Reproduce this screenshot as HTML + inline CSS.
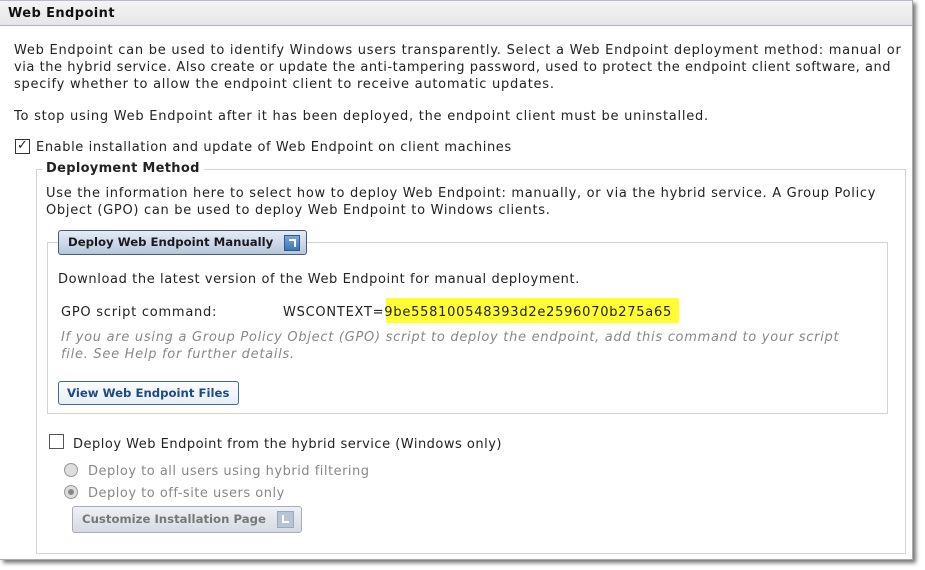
<!DOCTYPE html>
<html><head><style>
*{margin:0;padding:0;box-sizing:border-box}
body{width:925px;height:570px;background:#fff;position:relative;overflow:hidden;font-family:"DejaVu Sans","Liberation Sans",sans-serif;font-size:13px;color:#222;letter-spacing:0.75px}
.a{position:absolute;white-space:nowrap;line-height:17px;margin-top:1px}
#panel{position:absolute;left:0;top:0;width:913px;height:560px;background:#fff;border-right:1px solid #aaa;border-bottom:1px solid #aaa;box-shadow:3px 3px 4px #777}
#hdr{position:absolute;left:0;top:0;width:912px;height:26px;background:linear-gradient(#f4f4f4,#e6e6e6);border-top:1px solid #b8bcc8;border-bottom:1px solid #b0b4c0}
.box{position:absolute;border:1px solid #d4d4d4}
.btn{position:absolute;font-weight:bold;font-size:11.7px;letter-spacing:0;text-align:left;padding-left:9px;line-height:22px;border-radius:3px;white-space:nowrap}
.g{color:#888}
.cb{position:absolute;width:15px;height:15px;border:1px solid #333;background:#fff;letter-spacing:0}
.rd{position:absolute;width:14px;height:14px;border-radius:50%;border:1px solid #999;background:#ddd}
</style></head><body>
<div id="panel"></div>
<div id="hdr"></div>
<div class="a" style="left:8px;top:4px;font-weight:bold;color:#111;letter-spacing:0.4px">Web Endpoint</div>
<div class="a" style="left:14px;top:41px">Web Endpoint can be used to identify Windows users transparently. Select a Web Endpoint deployment method: manual or<br><span style="letter-spacing:0.55px">via the hybrid service. Also create or update the anti-tampering password, used to protect the endpoint client software, and</span><br>specify whether to allow the endpoint client to receive automatic updates.</div>
<div class="a" style="left:14px;top:107px">To stop using Web Endpoint after it has been deployed, the endpoint client must be uninstalled.</div>
<div class="cb" style="left:15px;top:139px;font-size:13px;line-height:12px;text-align:center">✓</div>
<div class="a" style="left:36px;top:138px;letter-spacing:0.6px">Enable installation and update of Web Endpoint on client machines</div>
<div class="box" style="left:36px;top:169px;width:870px;height:385px"></div>
<div class="a" style="left:42px;top:159px;background:#fff;padding:0 4px;font-weight:bold;letter-spacing:0.3px">Deployment Method</div>
<div class="a" style="left:46px;top:184px;letter-spacing:0.7px">Use the information here to select how to deploy Web Endpoint: manually, or via the hybrid service. A Group Policy<br>Object (GPO) can be used to deploy Web Endpoint to Windows clients.</div>
<div class="box" style="left:47px;top:242px;width:841px;height:172px"></div>
<div class="btn" style="left:58px;top:230px;width:249px;height:25px;border:1px solid #4a5a78;background:linear-gradient(#e4ebf5,#b7c6dc);color:#1a1a1a">Deploy Web Endpoint Manually
<span style="position:absolute;left:225px;top:4px;width:16px;height:16px;background:linear-gradient(#7aa6d4,#3f74b2);border:1px solid #2c5a93"><span style="position:absolute;left:4px;top:3px;width:7px;height:8px;border-top:2px solid #fff;border-right:2px solid #fff"></span></span></div>
<div class="a" style="left:58px;top:270px;letter-spacing:0.6px">Download the latest version of the Web Endpoint for manual deployment.</div>
<div class="a" style="left:61px;top:303px">GPO script command:</div>
<div style="position:absolute;left:386px;top:298px;width:293px;height:25px;background:#ffff33"></div>
<div class="a" style="left:283px;top:303px">WSCONTEXT=9be558100548393d2e2596070b275a65</div>
<div class="a g" style="left:61px;top:328px;font-style:italic;letter-spacing:0.72px">If you are using a Group Policy Object (GPO) script to deploy the endpoint, add this command to your script<br>file. See Help for further details.</div>
<div class="btn" style="left:58px;top:381px;width:181px;height:24px;border:1px solid #3e6aa0;background:linear-gradient(#fbfcfe,#e8eef6);color:#1d4b80;padding-left:8px">View Web Endpoint Files</div>
<div class="cb" style="left:49px;top:434px;border-color:#555"></div>
<div class="a" style="left:73px;top:435px;letter-spacing:0.5px">Deploy Web Endpoint from the hybrid service (Windows only)</div>
<div class="rd" style="left:64px;top:463px"></div>
<div class="a g" style="left:88px;top:462px;letter-spacing:0.5px">Deploy to all users using hybrid filtering</div>
<div class="rd" style="left:64px;top:485px"><span style="position:absolute;left:3px;top:3px;width:6px;height:6px;border-radius:50%;background:#888"></span></div>
<div class="a g" style="left:88px;top:484px;letter-spacing:0.5px">Deploy to off-site users only</div>
<div class="btn" style="left:72px;top:506px;width:230px;height:27px;border:1px solid #aab;background:linear-gradient(#eef0f4,#d6dae2);color:#777;line-height:25px">Customize Installation Page
<span style="position:absolute;left:204px;top:4px;width:17px;height:17px;background:#b8c4d4;border:1px solid #9aa8bc"><span style="position:absolute;left:4px;top:3px;width:7px;height:8px;border-left:2px solid #fff;border-bottom:2px solid #fff"></span></span></div>
</body></html>
